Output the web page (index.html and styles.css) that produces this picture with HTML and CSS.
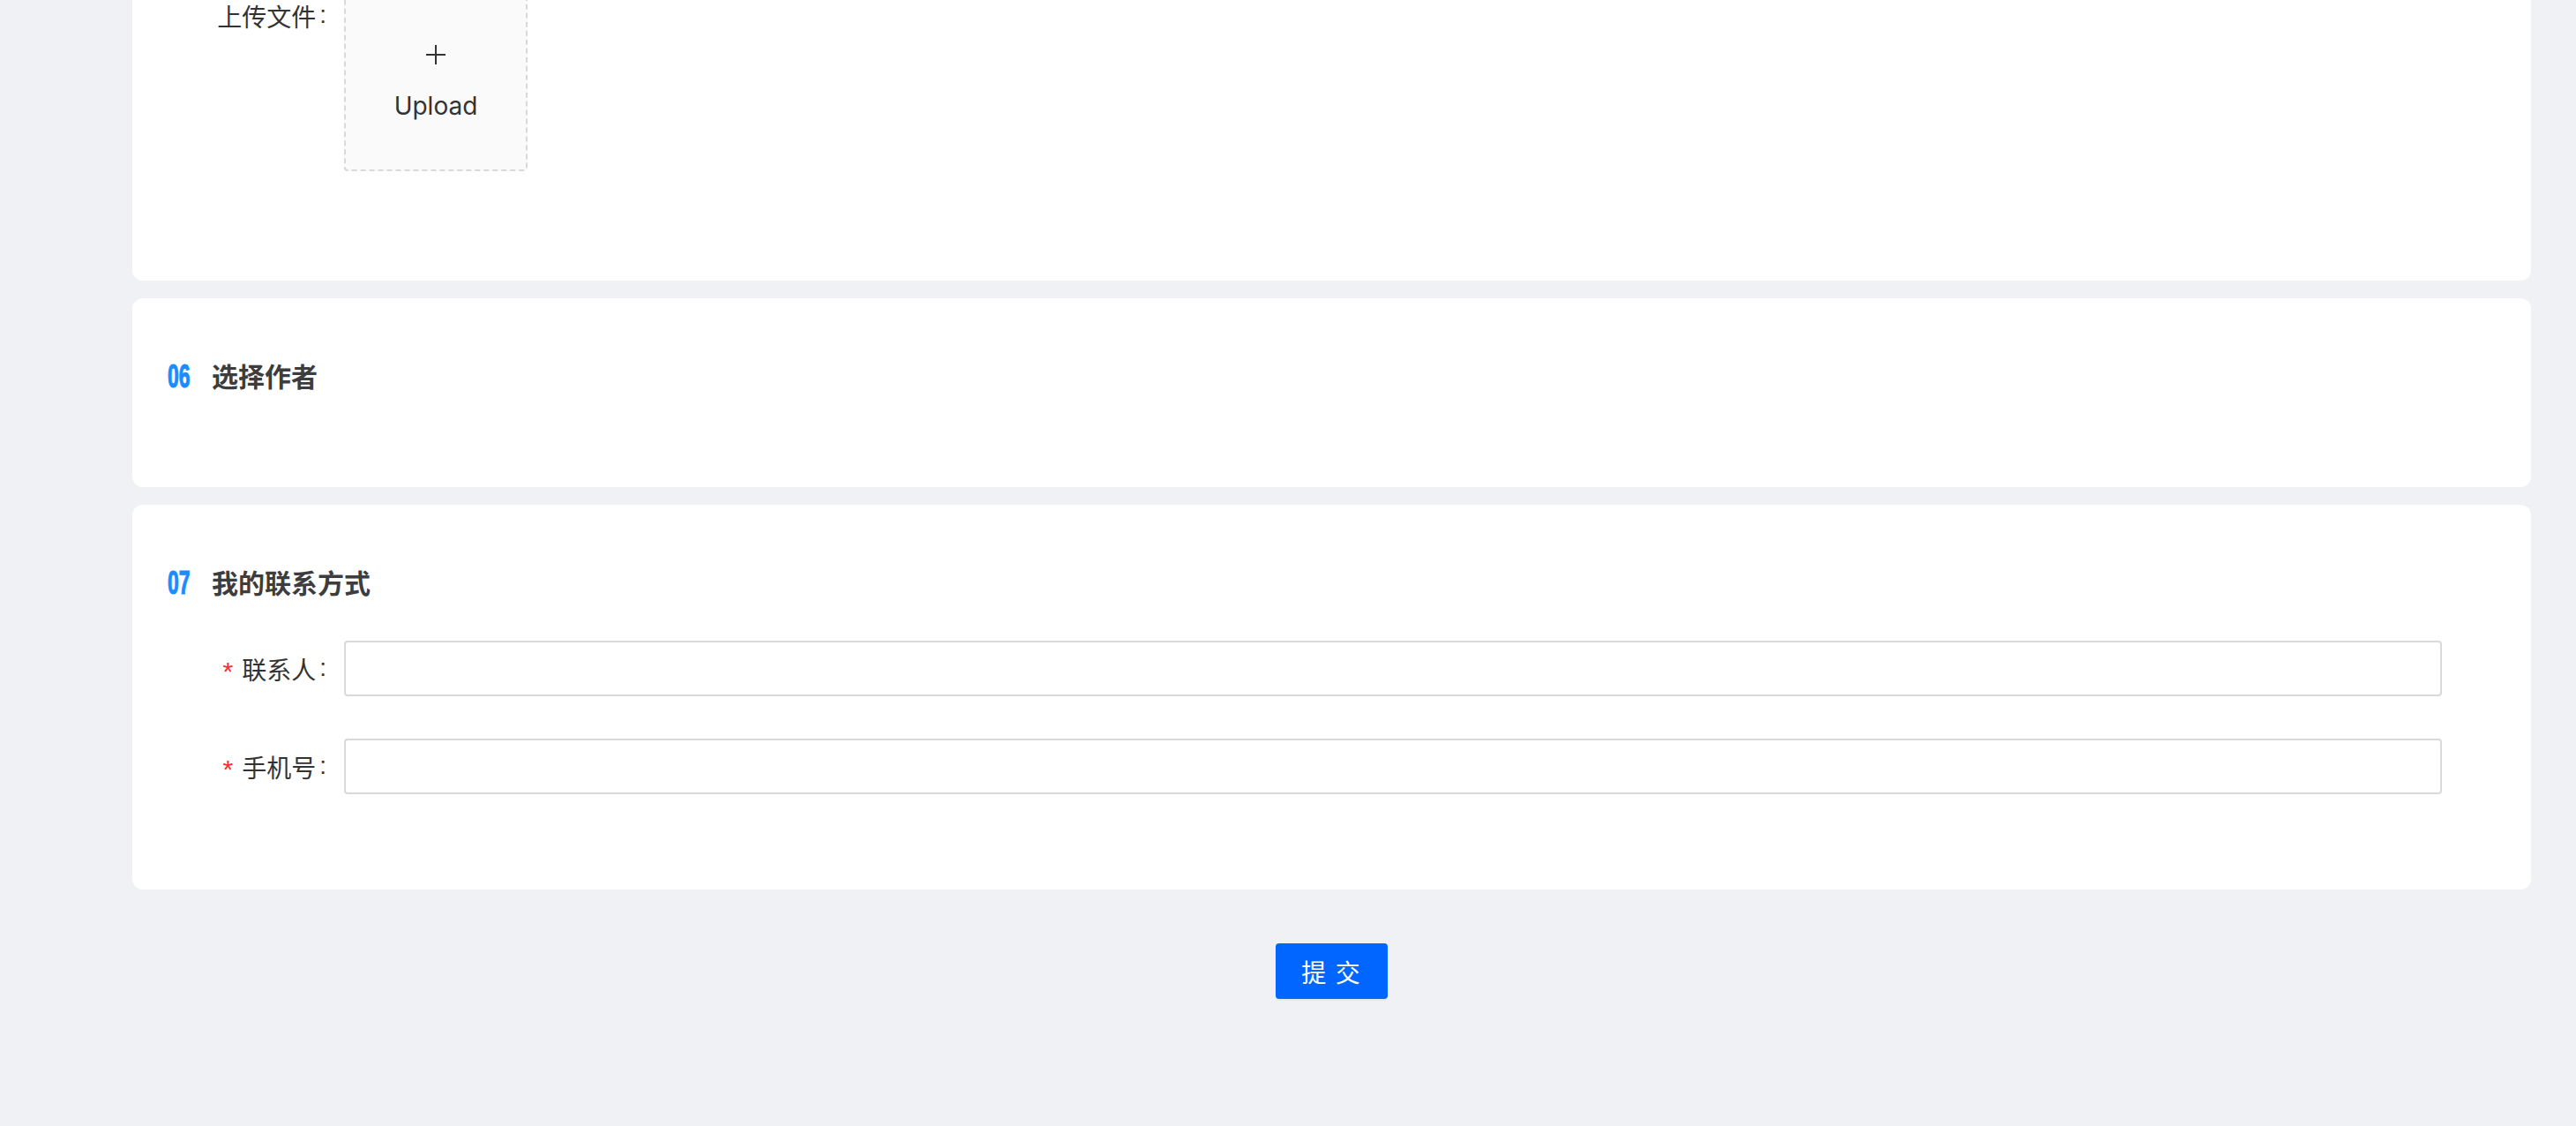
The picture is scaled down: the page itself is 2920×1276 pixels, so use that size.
FILE: index.html
```html
<!DOCTYPE html>
<html lang="zh-CN">
<head>
<meta charset="utf-8">
<title>表单</title>
<link rel="stylesheet" href="styles.css">
</head>
<body>
<div class="page">
  <section class="card card-upload">
    <div class="form-item form-item-upload">
      <div class="form-label"><span class="label-text">上传文件</span><span class="colon">:</span></div>
      <div class="form-control">
        <div class="upload-box">
          <svg class="plus" width="22" height="22" viewBox="0 0 22 22"><path d="M11 0V22M0 11H22" stroke="#333" stroke-width="2" fill="none"/></svg>
          <div class="upload-text">Upload</div>
        </div>
      </div>
    </div>
  </section>

  <section class="card">
    <h3 class="card-title"><span class="num"><span class="num-inner">06</span></span><span class="title-text">选择作者</span></h3>
  </section>

  <section class="card">
    <h3 class="card-title"><span class="num"><span class="num-inner">07</span></span><span class="title-text">我的联系方式</span></h3>
    <div class="form-item">
      <div class="form-label"><span class="req">*</span><span class="label-text">联系人</span><span class="colon">:</span></div>
      <div class="form-control"><input class="input" type="text"></div>
    </div>
    <div class="form-item">
      <div class="form-label"><span class="req">*</span><span class="label-text">手机号</span><span class="colon">:</span></div>
      <div class="form-control"><input class="input" type="text"></div>
    </div>
  </section>

  <div class="actions">
    <button class="btn-primary" type="button">提 交</button>
  </div>
</div>
</body>
</html>
```

FILE: styles.css
```css
html, body {
  margin: 0;
  padding: 0;
  background: #f0f1f5;
  font-family: "Inter", "Noto Sans CJK SC", sans-serif;
  color: rgba(0, 0, 0, 0.85);
}

.page {
  margin-top: -40px;
  padding: 0 51px 0 150px;
  display: flex;
  flex-direction: column;
  gap: 20px;
}

.card {
  background: #ffffff;
  border-radius: 12px;
  padding: 67px 101px 60px 40px;
}

.card-upload {
  padding-top: 26px;
  padding-bottom: 60px;
  border-top-left-radius: 0;
  border-top-right-radius: 0;
}

.card-title {
  margin: 0 0 47px 0;
  height: 40px;
  display: flex;
  align-items: center;
  font-size: 30px;
  font-weight: 700;
  color: #3d3d3d;
  font-family: "Noto Sans CJK SC", sans-serif;
  line-height: 40px;
}

.num {
  display: inline-block;
  width: 27px;
  margin-right: 23px;
  overflow: visible;
  white-space: nowrap;
}

.num-inner {
  display: inline-block;
  font-family: "Liberation Sans", "DejaVu Sans", sans-serif;
  font-weight: 700;
  font-size: 37px;
  color: #1a8cff;
  -webkit-text-stroke: 1.2px #1a8cff;
  transform: scaleX(0.62);
  transform-origin: left center;
  letter-spacing: 0;
  position: relative;
  top: 1px;
}

.form-item {
  display: flex;
  align-items: flex-start;
  margin-bottom: 48px;
}

.form-item-upload {
  margin-bottom: 64px;
}

.form-label {
  width: 200px;
  flex: none;
  height: 63px;
  display: flex;
  align-items: center;
  justify-content: flex-end;
  padding-right: 20px;
  box-sizing: border-box;
  font-family: "Noto Sans CJK SC", sans-serif;
  font-size: 28px;
  color: #333333;
  white-space: nowrap;
}

.form-item-upload .form-label {
  height: 64px;
}

.req {
  color: #ff2d2d;
  font-family: "Liberation Sans", sans-serif;
  font-size: 30px;
  margin-right: 10px;
  position: relative;
  top: 3px;
}

.colon {
  margin-left: 4px;
  font-family: "Liberation Sans", sans-serif;
  font-size: 28px;
  position: relative;
  top: -1px;
}

.form-control {
  flex: 1;
  min-width: 0;
}

.input {
  display: block;
  width: 100%;
  height: 63px;
  box-sizing: border-box;
  border: 2px solid #d9d9d9;
  border-radius: 4px;
  background: #ffffff;
  margin: 0;
  padding: 0 22px;
  font-size: 28px;
  outline: none;
}

.upload-box {
  width: 208px;
  height: 208px;
  box-sizing: border-box;
  border: 2px dashed #d9d9d9;
  border-radius: 4px;
  background: #fafafa;
  display: flex;
  flex-direction: column;
  align-items: center;
  justify-content: flex-start;
  padding-top: 63px;
}

.plus {
  display: block;
}

.upload-text {
  margin-top: 29px;
  font-family: "Inter", "Noto Sans", sans-serif;
  font-size: 28px;
  color: #333333;
  line-height: 36px;
}

.actions {
  display: flex;
  justify-content: center;
  padding-top: 41px;
  padding-bottom: 143px;
}

.btn-primary {
  width: 127px;
  height: 63px;
  border: none;
  border-radius: 4px;
  background: #0066ff;
  color: #ffffff;
  font-family: "Noto Sans CJK SC", sans-serif;
  font-size: 28px;
  letter-spacing: 2px;
  padding: 0;
  box-shadow: 0 2px 0 rgba(0, 0, 0, 0.045);
  cursor: pointer;
}
```
